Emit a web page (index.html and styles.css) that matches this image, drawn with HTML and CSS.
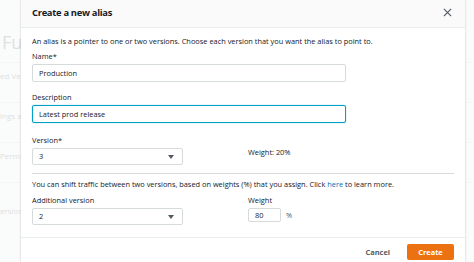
FILE: index.html
```html
<!DOCTYPE html>
<html>
<head>
<meta charset="utf-8">
<link rel="stylesheet" href="styles.css">
</head>
<body>
<div class="page">
  <div class="bg-title">Fun</div>
  <div class="bg-row">ed Ve</div>
  <div class="bg-row">ings a</div>
  <div class="bg-row">Permi</div>
  <div class="bg-row tall">ersion</div>
</div>
<div class="overlay"></div>
<div class="modal">
  <div class="modal-header">
    <span class="title">Create a new alias</span>
    <svg class="close" width="9" height="9" viewBox="0 0 10 10"><path d="M1 1 L9 9 M9 1 L1 9" stroke="#545b64" stroke-width="1.3" fill="none"/></svg>
  </div>
  <div class="modal-body">
    <p class="intro">An alias is a pointer to one or two versions. Choose each version that you want the alias to point to.</p>
    <label class="label">Name*</label>
    <div class="input wide name">Production</div>
    <label class="label">Description</label>
    <div class="input wide focus">Latest prod release</div>
    <div class="row">
      <div class="col-select">
        <label class="label">Version*</label>
        <div class="input select">3<span class="caret"></span></div>
      </div>
      <div class="weight-static">Weight: 20%</div>
    </div>
    <div class="divider"></div>
    <p class="intro shift">You can shift traffic between two versions, based on weights (%) that you assign. Click <a class="link">here</a> to learn more.</p>
    <div class="row">
      <div class="col-select">
        <label class="label">Additional version</label>
        <div class="input select">2<span class="caret"></span></div>
      </div>
      <div class="col-weight">
        <label class="label">Weight</label>
        <div class="weight-line"><div class="input small">80</div><span class="pct">%</span></div>
      </div>
    </div>
  </div>
  <div class="modal-footer">
    <span class="cancel">Cancel</span>
    <span class="create">Create</span>
  </div>
</div>
</body>
</html>
```
FILE: styles.css
```css
html, body { margin: 0; padding: 0; }
body {
  width: 474px; height: 262px; overflow: hidden; position: relative;
  background: #f4f5f5;
  font-family: "Open Sans", "Noto Sans", sans-serif;
  color: #16191f;
}
.page { padding-top: 30px; }
.bg-title { font-size: 18px; color: #b4b9bd; padding-left: 2px; height: 32px; border-bottom: 1px solid #e6e8e8; }
.bg-row { font-size: 8px; color: #b4b9bd; height: 39px; line-height: 26px; border-bottom: 1px solid #e6e8e8; }
.bg-row.tall { height: 56px; line-height: 56px; border-bottom: 0; }
.overlay { position: absolute; inset: 0; background: rgba(255,255,255,0.55); }
.modal {
  position: absolute; left: 21px; top: 0; width: 444px;
  background: #fff;
  box-shadow: 0 0 2px rgba(0,0,0,0.22);
}
.modal-header {
  height: 28px; background: #fafafa; border-bottom: 1px solid #eaeded;
  display: flex; align-items: center; justify-content: space-between;
  padding: 0 13px 3px 11px; box-sizing: border-box;
}
.title { font-weight: 700; font-size: 9.4px; letter-spacing: -0.3px; }
.close { display: block; }
.modal-body { padding: 0 11px; font-size: 7.4px; }
.intro { margin: 8px 0 5px; line-height: 10px; }
.label { display: block; line-height: 10px; color: #16191f; margin-bottom: 3px; }
.input {
  box-sizing: border-box; border: 1px solid #d5dbdb; border-radius: 2px;
  height: 18px; line-height: 16px; padding: 0 6px; margin-bottom: 12px;
}
.name { margin-bottom: 10px; }
.wide { width: 314px; }
.focus { border-color: #00a1c9; box-shadow: 0 0 1px #00a1c9; }
.row { display: flex; }
.col-select { width: 216px; }
.select { width: 151px; position: relative; height: 17px; line-height: 15px; }
.caret {
  position: absolute; right: 8px; top: 6px;
  border-left: 3px solid transparent; border-right: 3px solid transparent; border-top: 4px solid #545b64;
}
.weight-static { padding-top: 12px; line-height: 10px; }
.divider { height: 1px; background: #d5dbdb; margin-top: -4px; }
.shift { margin-top: 5px; margin-bottom: 6px; }
.weight-line { display: flex; align-items: center; }
.small { width: 33px; height: 14px; line-height: 12px; margin-bottom: 0; }
.pct { margin-left: 5px; color: #545b64; }
.link { color: #0073bb; }
.col-select .select { margin-bottom: 12px; }
.modal-footer {
  height: 25px; border-top: 1px solid #eaeded; box-sizing: border-box;
  display: flex; align-items: flex-start; justify-content: flex-end; padding: 6px 11px 0;
  font-size: 7.4px; font-weight: 700;
}
.cancel { color: #545b64; padding: 0 17px 0 0; line-height: 16px; }
.create { background: #ec7211; color: #fff; width: 47px; height: 16px; line-height: 16px; text-align: center; border-radius: 2px; }
```
